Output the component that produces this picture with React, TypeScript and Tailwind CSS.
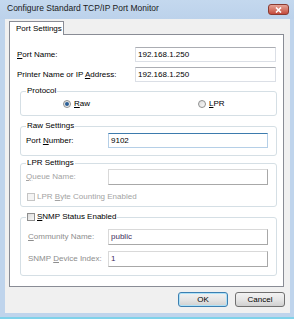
import React from "react";

const U = ({ children }: { children: React.ReactNode }) => (
  <span className="underline underline-offset-[1px]">{children}</span>
);

const Group = ({
  title,
  className,
  children,
}: {
  title: React.ReactNode;
  className: string;
  children?: React.ReactNode;
}) => (
  <div className={`relative ml-[10px] w-[257px] border border-[#d5dfe5] rounded-[3px] ${className}`}>
    <div className="absolute left-[5px] -top-[6px] bg-white px-[1px] leading-[10px] flex items-center">
      {title}
    </div>
    {children}
  </div>
);

const Input = ({
  value,
  className,
  variant = "normal",
}: {
  value?: string;
  className: string;
  variant?: "normal" | "focus" | "disabled";
}) => {
  const border =
    variant === "focus"
      ? "border-[#b5cfe7] border-t-[#3d7bad]"
      : variant === "disabled"
      ? "border-[#d9d9d9] border-r-[#a8a8a8] border-b-[#a8a8a8]"
      : "border-[#dbdfe6] border-t-[#abadb3]";
  return (
    <div className={`bg-white border flex items-center pl-[2px] ${border} ${className}`}>
      {value}
    </div>
  );
};

const Checkbox = ({ disabled }: { disabled?: boolean }) => (
  <span
    className={`inline-block w-[8px] h-[8px] border ${
      disabled ? "border-[#c5c5c5] bg-[#f4f4f4]" : "border-[#8f8f8f] bg-gradient-to-br from-[#dcdcdc] to-[#f8f8f8]"
    }`}
  />
);

const Radio = ({ checked }: { checked?: boolean }) => (
  <span className="w-[8px] h-[8px] rounded-full border border-[#8e8f8f] bg-gradient-to-br from-[#dcdcdc] to-[#fafafa] flex items-center justify-center">
    {checked && <span className="w-[4px] h-[4px] rounded-full bg-[#2b5f97]" />}
  </span>
);

export default function App() {
  return (
    <div className="w-[294px] h-[319px] bg-[#bfd4ec] flex flex-col font-['Liberation_Sans',Arial,sans-serif] text-[8px] text-black leading-none">
      {/* Title bar */}
      <div className="h-[19px] flex items-start justify-between pl-[7px] pr-[5px] bg-gradient-to-b from-[#c4d8ee] to-[#bcd2eb]">
        <span className="mt-[4px] text-[8.5px] text-[#1a1a1a]">Configure Standard TCP/IP Port Monitor</span>
        <div className="mt-[4px] w-[21px] h-[11px] rounded-[3px] border border-[#8a3a30] bg-gradient-to-b from-[#e4a396] to-[#c4493b] flex items-center justify-center">
          <svg width="7" height="6" viewBox="0 0 7 6">
            <path d="M1 0.5 L6 5.5 M6 0.5 L1 5.5" stroke="#fff" strokeWidth="1.6" />
          </svg>
        </div>
      </div>

      {/* Client area */}
      <div className="ml-[5px] mr-[4px] h-[294px] bg-[#f0f0f0] flex flex-col">
        {/* Tab header */}
        <div className="mt-[2px] ml-[4px] w-[55px] h-[14px] bg-white border border-b-0 border-[#898c95] flex items-center pl-[6px] relative z-10 -mb-[1px]">
          Port Settings
        </div>

        {/* Tab panel */}
        <div className="ml-[4px] w-[275px] h-[253px] bg-white border border-[#898c95] flex flex-col">
          <div className="mt-[12px] flex items-center h-[15px]">
            <span className="pl-[7px]">
              <U>P</U>ort Name:
            </span>
            <Input value="192.168.1.250" className="ml-auto mr-[7px] w-[141px] h-[15px]" />
          </div>
          <div className="mt-[5px] flex items-center h-[15px]">
            <span className="pl-[7px]">
              Printer Name or IP <U>A</U>ddress:
            </span>
            <Input value="192.168.1.250" className="ml-auto mr-[7px] w-[141px] h-[15px]" />
          </div>

          {/* Protocol */}
          <Group title="Protocol" className="mt-[9px] h-[25px] flex items-center">
            <div className="w-[177px] pl-[42px] flex items-center gap-[3px]">
              <Radio checked />
              <span>
                <U>R</U>aw
              </span>
            </div>
            <div className="flex items-center gap-[3px]">
              <Radio />
              <span>
                <U>L</U>PR
              </span>
            </div>
          </Group>

          {/* Raw Settings */}
          <Group title="Raw Settings" className="mt-[10px] h-[30px]">
            <div className="mt-[6px] flex items-center h-[15px]">
              <span className="pl-[5px]">
                Port <U>N</U>umber:
              </span>
              <Input value="9102" variant="focus" className="ml-auto mr-[8px] w-[160px] h-[15px]" />
            </div>
          </Group>

          {/* LPR Settings */}
          <Group title="LPR Settings" className="mt-[7px] h-[44px]">
            <div className="mt-[5px] flex items-center h-[16px]">
              <span className="pl-[5px] text-[#a3a3a3]">
                <U>Q</U>ueue Name:
              </span>
              <Input variant="disabled" className="ml-auto mr-[8px] w-[160px] h-[16px]" />
            </div>
            <div className="mt-[8px] pl-[6px] flex items-center gap-[2px] text-[#a3a3a3]">
              <Checkbox disabled />
              <span>
                LPR <U>B</U>yte Counting Enabled
              </span>
            </div>
          </Group>

          {/* SNMP */}
          <Group
            title={
              <span className="flex items-center gap-[2px]">
                <Checkbox />
                <span>
                  <U>S</U>NMP Status Enabled
                </span>
              </span>
            }
            className="mt-[10px] h-[59px]"
          >
            <div className="mt-[11px] flex items-center h-[16px]">
              <span className="pl-[7px] text-[#8d8d8d]">
                <U>C</U>ommunity Name:
              </span>
              <Input value="public" variant="disabled" className="ml-auto mr-[8px] w-[160px] h-[16px] text-[#3d2d5d]" />
            </div>
            <div className="mt-[6px] flex items-center h-[16px]">
              <span className="pl-[7px] text-[#8d8d8d]">
                SNMP <U>D</U>evice Index:
              </span>
              <Input value="1" variant="disabled" className="ml-auto mr-[8px] w-[160px] h-[16px] text-[#3d2d5d]" />
            </div>
          </Group>
        </div>

        {/* Buttons */}
        <div className="mt-[5px] flex justify-end gap-[7px] pr-[5px]">
          <button className="w-[50px] h-[15px] rounded-[3px] border border-[#3c7fb1] bg-gradient-to-b from-[#f2f2f2] via-[#e6e6e6] to-[#d0d0d0] shadow-[inset_0_0_0_1px_#aee1f7] text-[8px] flex items-center justify-center">
            OK
          </button>
          <button className="w-[50px] h-[15px] rounded-[3px] border border-[#707070] bg-gradient-to-b from-[#f2f2f2] via-[#e6e6e6] to-[#d0d0d0] text-[8px] flex items-center justify-center">
            Cancel
          </button>
        </div>
      </div>

      {/* Bottom frame */}
      <div className="flex-1 border-b-[2px] border-[#7fd2ea]" />
    </div>
  );
}
